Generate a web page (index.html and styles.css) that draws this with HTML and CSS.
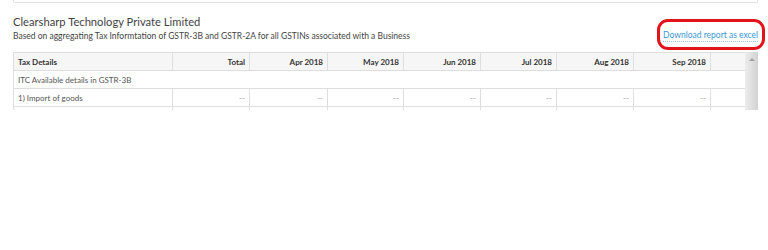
FILE: index.html
```html
<!DOCTYPE html>
<html lang="en">
<head>
    <meta charset="UTF-8">
    <title>ITC Report</title>
    <link rel="stylesheet" href="styles.css">
</head>
<body>
    <div class="top-card"></div>

    <div class="report-head">
        <div class="report-title">
            <h1>Clearsharp Technology Private Limited</h1>
            <p>Based on aggregating Tax Informtation of GSTR-3B and GSTR-2A for all GSTINs associated with a Business</p>
        </div>
        <a href="#" class="download-link">
            Download report as excel
            <span class="highlight"></span>
        </a>
    </div>

    <div class="table-box">
        <div class="table-wrap">
            <table class="report-table">
                <colgroup>
                    <col style="width: 159px">
                    <col style="width: 77px">
                    <col style="width: 78px">
                    <col style="width: 76px">
                    <col style="width: 77px">
                    <col style="width: 76px">
                    <col style="width: 77px">
                    <col style="width: 77px">
                    <col style="width: 35px">
                </colgroup>
                <thead>
                    <tr>
                        <th class="left">Tax Details</th>
                        <th>Total</th>
                        <th>Apr 2018</th>
                        <th>May 2018</th>
                        <th>Jun 2018</th>
                        <th>Jul 2018</th>
                        <th>Aug 2018</th>
                        <th>Sep 2018</th>
                        <th></th>
                    </tr>
                </thead>
                <tbody>
                    <tr class="section-row">
                        <td colspan="9">ITC Available details in GSTR-3B</td>
                    </tr>
                    <tr>
                        <td class="left">1) Import of goods</td>
                        <td class="empty">--</td>
                        <td class="empty">--</td>
                        <td class="empty">--</td>
                        <td class="empty">--</td>
                        <td class="empty">--</td>
                        <td class="empty">--</td>
                        <td class="empty">--</td>
                        <td></td>
                    </tr>
                    <tr>
                        <td class="left">&nbsp;</td>
                        <td></td><td></td><td></td><td></td><td></td><td></td><td></td><td></td>
                    </tr>
                </tbody>
            </table>
        </div>
        <div class="scrollbar">
            <span class="arrow-up"></span>
        </div>
    </div>
</body>
</html>
```

FILE: styles.css
```css
* {
    margin: 0;
    padding: 0;
    box-sizing: border-box;
}

body {
    background: #fff;
    padding: 0 10px 0 13px;
    font-family: Lato, "Open Sans", sans-serif;
    color: #444;
    overflow: hidden;
}

.top-card {
    height: 3px;
    border: 1px solid #e2e2e2;
    border-top: none;
    border-radius: 0 0 2px 2px;
}

.report-head {
    display: flex;
    justify-content: space-between;
    align-items: flex-end;
    margin-top: 12px;
}

.report-title h1 {
    font-size: 11.2px;
    font-weight: 400;
    color: #3f3f3f;
    line-height: 14px;
}

.report-title p {
    font-size: 8.5px;
    color: #444;
    line-height: 12px;
    margin-top: 1px;
}

.download-link {
    position: relative;
    font-size: 8.5px;
    line-height: 12px;
    color: #3a97d4;
    text-decoration: none;
    border-bottom: 1px dotted #9cc8e6;
}

.highlight {
    position: absolute;
    top: -10px;
    bottom: -9px;
    left: -6px;
    right: -7px;
    border: 3px solid #e3131c;
    border-radius: 11px;
}

.table-box {
    display: flex;
    height: 58px;
    margin-top: 10px;
    overflow: hidden;
}

.table-wrap {
    width: 732px;
    overflow: hidden;
}

.report-table {
    width: 732px;
    table-layout: fixed;
    border-collapse: collapse;
    font-size: 8px;
    color: #555;
}

.report-table th,
.report-table td {
    height: 18px;
    padding: 0 4px;
    border: 1px solid #dedede;
    text-align: right;
    white-space: nowrap;
}

.report-table th {
    background: #f6f6f6;
    font-weight: 700;
    color: #333;
}

.report-table .left,
.section-row td {
    text-align: left;
}

.empty {
    color: #999;
}

.scrollbar {
    position: relative;
    width: 13px;
    background: linear-gradient(to right, #ececec, #d2d2d2);
}

.arrow-up {
    position: absolute;
    top: 6px;
    left: 4px;
    width: 0;
    height: 0;
    border-left: 3px solid transparent;
    border-right: 3px solid transparent;
    border-bottom: 3px solid #a0a0a0;
}
```
